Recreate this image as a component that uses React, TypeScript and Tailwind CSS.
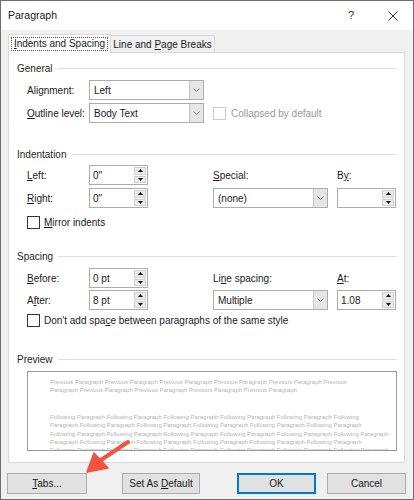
import React from 'react';

const font = { fontFamily: '"Liberation Sans", Arial, sans-serif' };

function U({ children }: { children: React.ReactNode }) {
  return <span className="underline underline-offset-[1px]">{children}</span>;
}

function Heading({ text }: { text: string }) {
  return (
    <div className="flex items-center h-[14px] pl-[8px] pr-[7px]">
      <span className="text-[#262626]">{text}</span>
      <div className="flex-1 h-px bg-[#dedede] ml-[5px]" />
    </div>
  );
}

function Dropdown({ value, w }: { value: string; w: string }) {
  return (
    <div className={`${w} h-[20px] border border-[#adadad] bg-white flex`}>
      <div className="flex-1 flex items-center pl-[4px] text-[#1a1a1a]">{value}</div>
      <div className="w-[14px] bg-[#e6e6e6] border-l border-[#c6c6c6] flex items-center justify-center">
        <svg width="7" height="4" viewBox="0 0 7 4">
          <path d="M0.5 0.5 L3.5 3.5 L6.5 0.5" fill="none" stroke="#707070" strokeWidth="0.9" />
        </svg>
      </div>
    </div>
  );
}

function Spin({ value }: { value: string }) {
  return (
    <div className="w-[59px] h-[20px] border border-[#adadad] bg-white flex">
      <div className="flex-1 flex items-center pl-[3px] text-[#1a1a1a]">{value}</div>
      <div className="w-[14px] flex flex-col gap-px p-px bg-white">
        <div className="flex-1 bg-[#ececec] border border-[#cfcfcf] flex items-center justify-center">
          <svg width="5" height="3" viewBox="0 0 5 3">
            <path d="M0 3 L2.5 0 L5 3 Z" fill="#111" />
          </svg>
        </div>
        <div className="flex-1 bg-[#ececec] border border-[#cfcfcf] flex items-center justify-center">
          <svg width="5" height="3" viewBox="0 0 5 3">
            <path d="M0 0 L2.5 3 L5 0 Z" fill="#111" />
          </svg>
        </div>
      </div>
    </div>
  );
}

function Check({ disabled }: { disabled?: boolean }) {
  return (
    <div
      className={`w-[13px] h-[13px] bg-white border ${disabled ? 'border-[#cccccc]' : 'border-[#333333]'}`}
    />
  );
}

function Button({ children, w, focused }: { children: React.ReactNode; w: string; focused?: boolean }) {
  return (
    <div
      className={`${w} h-[21px] flex items-center justify-center bg-[#e1e1e1] text-[#1a1a1a] ${
        focused ? 'border-2 border-[#0078d7]' : 'border border-[#adadad]'
      }`}
    >
      {children}
    </div>
  );
}

const prevLines = [
  'Previous Paragraph Previous Paragraph Previous Paragraph Previous Paragraph Previous Paragraph Previous',
  'Paragraph Previous Paragraph Previous Paragraph Previous Paragraph Previous Paragraph',
];

const followLines = [
  'Following Paragraph Following Paragraph Following Paragraph Following Paragraph Following Paragraph Following',
  'Paragraph Following Paragraph Following Paragraph Following Paragraph Following Paragraph Following Paragraph',
  'Following Paragraph Following Paragraph Following Paragraph Following Paragraph Following Paragraph Following Paragraph',
  'Paragraph Following Paragraph Following Paragraph Following Paragraph Following Paragraph Following Paragraph',
  'Following Paragraph Following Paragraph Following Paragraph Following Paragraph Following Paragraph Following Paragraph',
];

export default function App() {
  return (
    <div
      className="relative w-[414px] h-[500px] bg-[#f0f0f0] border border-[#6e6e6e] text-[10px] text-[#1a1a1a] overflow-hidden"
      style={font}
    >
      {/* Title bar */}
      <div className="h-[29px] bg-white flex items-center pl-[7px] text-[10.5px] text-[#1a1a1a]">
        <span>Paragraph</span>
        <span className="ml-auto mr-[34px] text-[11px] text-[#333]">?</span>
        <svg className="mr-[15px]" width="10" height="10" viewBox="0 0 10 10">
          <path d="M0.5 0.5 L9.5 9.5 M9.5 0.5 L0.5 9.5" stroke="#333" strokeWidth="1" />
        </svg>
      </div>

      {/* Tabs */}
      <div className="h-[22px] flex items-end pl-[7px]">
        <div className="relative z-10 w-[103px] h-[19px] -mb-px bg-white border border-b-0 border-[#d9d9d9] flex items-center justify-center">
          <span className="border border-dotted border-[#555] px-[2px] leading-[12px]">
            <U>I</U>ndents and Spacing
          </span>
        </div>
        <div className="w-[104px] h-[17px] bg-[#f0f0f0] border border-l-0 border-b-0 border-[#d9d9d9] flex items-center justify-center">
          <span>
            Line and <U>P</U>age Breaks
          </span>
        </div>
      </div>

      {/* Panel */}
      <div className="ml-[7px] w-[397px] h-[411px] bg-white border border-[#d9d9d9] flex flex-col">
        <div className="mt-[8px]">
          <Heading text="General" />
        </div>
        <div className="ml-[18px] mt-[5px] flex flex-col gap-[3px]">
          <div className="flex items-center">
            <span className="w-[62px]">
              Ali<U>g</U>nment:
            </span>
            <Dropdown value="Left" w="w-[115px]" />
          </div>
          <div className="flex items-center">
            <span className="w-[62px]">
              <U>O</U>utline level:
            </span>
            <Dropdown value="Body Text" w="w-[115px]" />
            <div className="ml-[9px] flex items-center gap-[5px] text-[#9a9a9a]">
              <Check disabled />
              <span>Collapsed by default</span>
            </div>
          </div>
        </div>

        <div className="mt-[24px]">
          <Heading text="Indentation" />
        </div>
        <div className="ml-[18px] mt-[4px] flex flex-col gap-[3px]">
          <div className="flex items-center h-[20px]">
            <span className="w-[62px]">
              <U>L</U>eft:
            </span>
            <Spin value={'0"'} />
            <span className="ml-[65px] w-[124px]">
              <U>S</U>pecial:
            </span>
            <span>
              B<U>y</U>:
            </span>
          </div>
          <div className="flex items-center h-[20px]">
            <span className="w-[62px]">
              <U>R</U>ight:
            </span>
            <Spin value={'0"'} />
            <div className="ml-[65px]">
              <Dropdown value="(none)" w="w-[115px]" />
            </div>
            <div className="ml-[9px]">
              <Spin value="" />
            </div>
          </div>
        </div>
        <div className="ml-[18px] mt-[7px] flex items-center gap-[4px]">
          <Check />
          <span>
            <U>M</U>irror indents
          </span>
        </div>

        <div className="mt-[19px]">
          <Heading text="Spacing" />
        </div>
        <div className="ml-[18px] mt-[5px] flex flex-col gap-[2px]">
          <div className="flex items-center h-[20px]">
            <span className="w-[62px]">
              <U>B</U>efore:
            </span>
            <Spin value="0 pt" />
            <span className="ml-[65px] w-[124px]">
              Li<U>n</U>e spacing:
            </span>
            <span>
              <U>A</U>t:
            </span>
          </div>
          <div className="flex items-center h-[20px]">
            <span className="w-[62px]">
              A<U>f</U>ter:
            </span>
            <Spin value="8 pt" />
            <div className="ml-[65px]">
              <Dropdown value="Multiple" w="w-[115px]" />
            </div>
            <div className="ml-[9px]">
              <Spin value="1.08" />
            </div>
          </div>
        </div>
        <div className="ml-[18px] mt-[3px] flex items-center gap-[4px]">
          <Check />
          <span>
            Don't add spa<U>c</U>e between paragraphs of the same style
          </span>
        </div>

        <div className="mt-[24px]">
          <Heading text="Preview" />
        </div>
        <div className="ml-[18px] mt-[5px] w-[370px] h-[80px] border border-[#9a9a9a] overflow-hidden pl-[22px] pt-[6px] text-[6px] leading-[8.4px] text-[#b4b4b4] whitespace-nowrap">
          {prevLines.map((l, i) => (
            <div key={i}>{l}</div>
          ))}
          <div className="h-[18px]" />
          {followLines.map((l, i) => (
            <div key={i}>{l}</div>
          ))}
        </div>
      </div>

      {/* Buttons */}
      <div className="mt-[10px] ml-[6px] flex items-center">
        <Button w="w-[80px]">
          <span>
            <U>T</U>abs...
          </span>
        </Button>
        <div className="ml-[35px]">
          <Button w="w-[78px]">
            <span>
              Set As <U>D</U>efault
            </span>
          </Button>
        </div>
        <div className="ml-[37px]">
          <Button w="w-[79px]" focused>
            OK
          </Button>
        </div>
        <div className="ml-[11px]">
          <Button w="w-[79px]">Cancel</Button>
        </div>
      </div>

      {/* Annotation arrow */}
      <svg className="absolute left-[-1px] top-[-1px] pointer-events-none" width="414" height="500" viewBox="0 0 414 500">
        <line x1="128" y1="442" x2="98" y2="462" stroke="#f0533f" strokeWidth="4" strokeLinecap="round" />
        <polygon points="87,472 94,453 108,468" fill="#f0533f" stroke="#f0533f" strokeWidth="1.5" strokeLinejoin="round" />
      </svg>
    </div>
  );
}
